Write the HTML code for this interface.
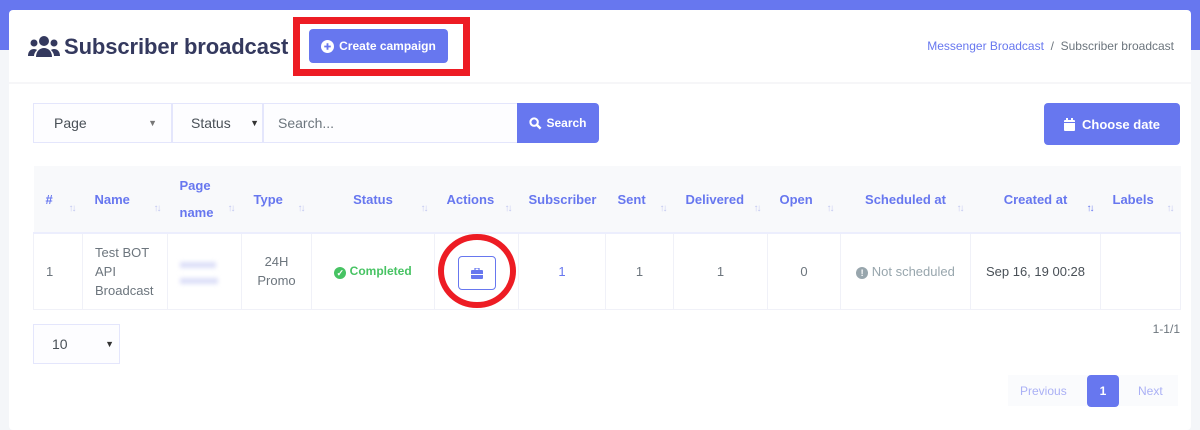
<!DOCTYPE html>
<html><head><meta charset="utf-8"><style>
*{box-sizing:border-box;margin:0;padding:0}
body{width:1200px;height:422px;background:#f4f6f9;font-family:"Liberation Sans",sans-serif;position:relative;overflow:hidden;color:#6c757d}
.abs{position:absolute}
.top{left:0;top:0;width:1200px;height:50px;background:#6777ef}
.card{left:9px;top:10px;width:1182px;height:420px;background:#fff;border-radius:4px}
.hline{left:9px;top:82px;width:1182px;height:2px;background:#f6f6f8}
h1{position:absolute;left:64px;top:34px;font-size:22px;font-weight:bold;color:#34395e;letter-spacing:-0.1px}
.btn{background:#6777ef;color:#fff;font-weight:bold;border-radius:4px;display:flex;align-items:center;justify-content:center}
.inp{border:1px solid #e4e6fc;background:#fdfdff;color:#495057;font-size:14px;display:flex;align-items:center}
table{position:absolute;left:33px;top:166px;border-collapse:collapse;font-size:13px;table-layout:fixed}
th{background:#f8f9fb;color:#6777ef;height:67px;font-weight:bold;text-align:left;padding:0 12px;position:relative;border-bottom:2px solid #eceefd;line-height:27px}
td{height:76px;border:1px solid #f0f1f8;color:#6c757d;text-align:center;padding:0 12px}
.s{position:absolute;right:8px;top:38px;color:#c4c9f0;font-size:10px;letter-spacing:-2px;line-height:10px}
</style></head><body>
<div class="abs top"></div>
<div class="abs card"></div>
<div class="abs hline"></div>
<svg class="abs" style="left:28px;top:36px" width="32" height="22" viewBox="0 0 32 22"><g fill="#34395e"><circle cx="16" cy="5" r="5"/><circle cx="6" cy="7" r="3.5"/><circle cx="26" cy="7" r="3.5"/><path d="M8 21c0-6 4-9 8-9s8 3 8 9z"/><path d="M0 20c0-5 3-7 6-7 1.5 0 2.5.5 3 1-2 2-3 4-3 6z"/><path d="M32 20c0-5-3-7-6-7-1.5 0-2.5.5-3 1 2 2 3 4 3 6z"/></g></svg>
<h1>Subscriber broadcast</h1>
<div class="abs btn" style="left:309px;top:29px;width:139px;height:34px;font-size:12px"><svg width="13" height="13" viewBox="0 0 14 14" style="margin-right:5px"><circle cx="7" cy="7" r="7" fill="#fff"/><path d="M7 3.5v7M3.5 7h7" stroke="#6777ef" stroke-width="2"/></svg>Create campaign</div>
<div class="abs" style="left:293px;top:17px;width:177px;height:59px;border:7px solid #ed1c24"></div>
<div class="abs" style="right:26px;top:39px;font-size:12px;color:#6c757d"><span style="color:#6777ef">Messenger Broadcast</span>&nbsp; / &nbsp;Subscriber broadcast</div>

<div class="abs inp" style="left:33px;top:103px;width:139px;height:40px;padding-left:20px">Page<span style="position:absolute;right:14px;font-size:9px;color:#777">▼</span></div>
<div class="abs inp" style="left:172px;top:103px;width:91px;height:40px;padding-left:18px">Status<span style="position:absolute;right:3px;font-size:9px;color:#333">▼</span></div>
<div class="abs inp" style="left:263px;top:103px;width:255px;height:40px;padding-left:14px;color:#6c757d">Search...</div>
<div class="abs btn" style="left:517px;top:103px;width:82px;height:40px;font-size:12px;border-radius:0 4px 4px 0"><svg width="13" height="13" viewBox="0 0 14 14" style="margin-right:4px"><circle cx="5.5" cy="5.5" r="4" stroke="#fff" stroke-width="2.2" fill="none"/><path d="M8.5 8.5l4 4" stroke="#fff" stroke-width="2.6"/></svg>Search</div>
<div class="abs btn" style="left:1044px;top:103px;width:136px;height:42px;font-size:13px"><svg width="11" height="13" viewBox="0 0 11 13" style="margin-right:7px"><rect x="0" y="2" width="11" height="11" rx="1" fill="#fff"/><rect x="2" y="0" width="2" height="3" fill="#fff"/><rect x="7" y="0" width="2" height="3" fill="#fff"/><rect x="0" y="4" width="11" height="1" fill="#6777ef"/></svg>Choose date</div>

<table style="width:1147px">
<colgroup><col style="width:49px"><col style="width:85px"><col style="width:74px"><col style="width:70px"><col style="width:123px"><col style="width:84px"><col style="width:87px"><col style="width:68px"><col style="width:94px"><col style="width:73px"><col style="width:130px"><col style="width:130px"><col style="width:80px"></colgroup>
<tr>
<th>#<span class="s">↑↓</span></th>
<th>Name<span class="s">↑↓</span></th>
<th>Page<br>name<span class="s">↑↓</span></th>
<th>Type<span class="s">↑↓</span></th>
<th style="text-align:center">Status<span class="s">↑↓</span></th>
<th>Actions<span class="s">↑↓</span></th>
<th style="padding:0 10px">Subscriber</th>
<th>Sent<span class="s">↑↓</span></th>
<th>Delivered<span class="s">↑↓</span></th>
<th>Open<span class="s">↑↓</span></th>
<th style="text-align:center">Scheduled at<span class="s">↑↓</span></th>
<th style="text-align:center">Created at<span class="s" style="color:#6777ef">↑↓</span></th>
<th>Labels<span class="s">↑↓</span></th>
</tr>
<tr>
<td style="text-align:left">1</td>
<td style="text-align:left;line-height:19px">Test BOT<br>API<br>Broadcast</td>
<td><div style="width:36px;height:6px;background:#dcdff8;margin:4px 0 10px 0;filter:blur(2px)"></div><div style="width:38px;height:6px;background:#dcdff8;filter:blur(2px)"></div></td>
<td style="line-height:19px">24H<br>Promo</td>
<td style="color:#47c363;font-weight:bold;font-size:12px;padding:0"><span style="display:inline-block;width:12px;height:12px;border-radius:50%;background:#47c363;color:#fff;font-size:9px;line-height:12px;vertical-align:-1px">✓</span> Completed</td>
<td><div style="display:inline-block;width:38px;height:34px;border:1px solid #6777ef;border-radius:4px;position:relative;top:2px"><svg width="12" height="11" viewBox="0 0 12 11" style="margin-top:11px"><rect x="0" y="2" width="12" height="9" rx="1" fill="#6777ef"/><rect x="4" y="0" width="4" height="3" fill="none" stroke="#6777ef" stroke-width="1.2"/><rect x="0" y="6" width="12" height="1" fill="#fff"/></svg></div></td>
<td style="color:#6777ef">1</td>
<td>1</td><td>1</td><td>0</td>
<td style="color:#98a6ad;padding:0"><span style="display:inline-block;width:12px;height:12px;border-radius:50%;background:#98a6ad;color:#fff;font-size:9px;line-height:12px;font-weight:bold">!</span> Not scheduled</td>
<td style="color:#495057;padding:0">Sep 16, 19 00:28</td>
<td></td>
</tr>
</table>
<svg class="abs" style="left:436px;top:232px" width="82" height="78"><ellipse cx="41" cy="39" rx="36" ry="34" fill="none" stroke="#ed1c24" stroke-width="6"/></svg>

<div class="abs inp" style="left:33px;top:324px;width:87px;height:40px;padding-left:18px">10<span style="position:absolute;right:5px;font-size:9px;color:#333">▼</span></div>
<div class="abs" style="right:20px;top:322px;font-size:12px;color:#6c757d">1-1/1</div>
<div class="abs" style="left:1008px;top:375px;width:170px;height:31px;background:#fafbfd"></div>
<div class="abs" style="left:1020px;top:384px;font-size:12px;color:#aab0f5">Previous</div>
<div class="abs btn" style="left:1087px;top:375px;width:32px;height:32px;font-size:12px">1</div>
<div class="abs" style="left:1138px;top:384px;font-size:12px;color:#aab0f5">Next</div>
</body></html>
